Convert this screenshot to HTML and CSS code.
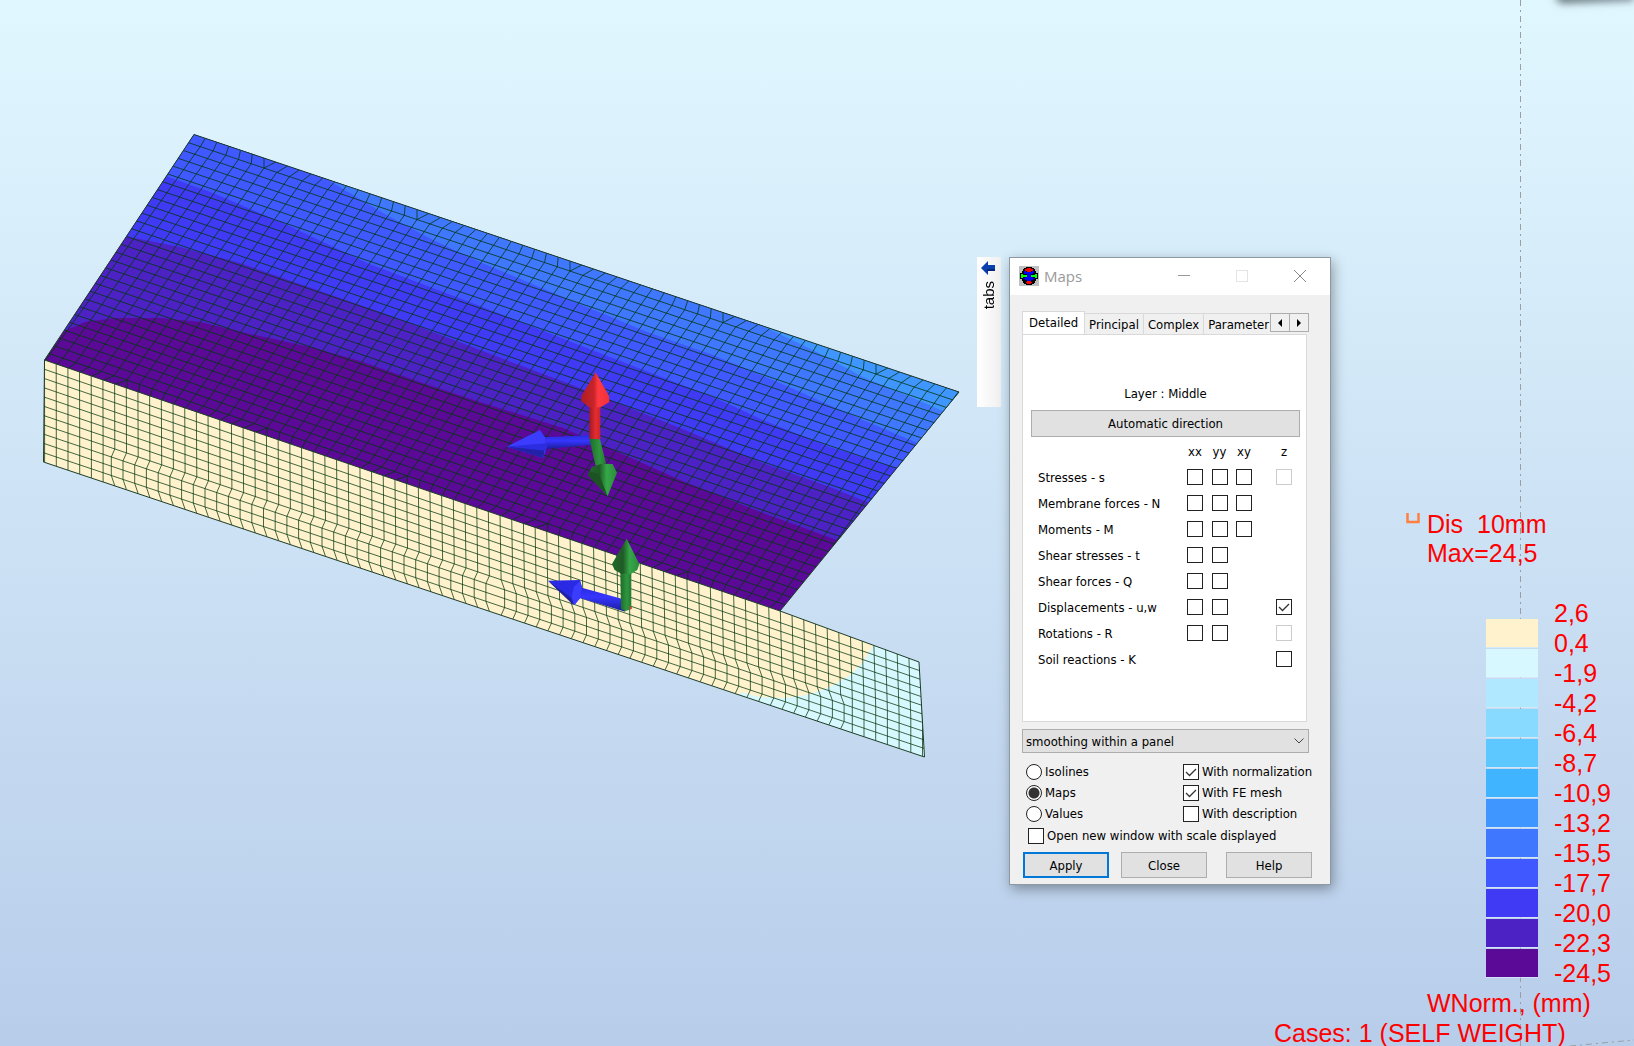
FILE: index.html
```html
<!DOCTYPE html>
<html lang="en">
<head>
    <meta charset="UTF-8">
    <meta name="viewport" content="width=device-width, initial-scale=1.0">
    <title>Maps</title>
    <link rel="stylesheet" href="styles.css">
</head>
<body>
    <main class="viewport">

        <svg class="scene" viewBox="0 0 1634 1046" preserveAspectRatio="xMinYMin slice" aria-hidden="true">
            <defs>
                <clipPath id="slabClip"><path d="M194 134.500 L959 392 L780 611 L400 490 L44.500 360 Z"/></clipPath>
                <clipPath id="wallClip"><path d="M44.500 360 L780 611 L919 662 L924.500 757 L43.500 462 Z"/></clipPath>
                <filter id="soft" x="-50%" y="-200%" width="200%" height="500%"><feGaussianBlur stdDeviation="4"/></filter>
                <linearGradient id="redShaft"><stop offset="0" stop-color="#a01a20"/><stop offset=".6" stop-color="#e62c32"/><stop offset="1" stop-color="#c8242c"/></linearGradient>
                <linearGradient id="redCone"><stop offset="0" stop-color="#b01c22"/><stop offset=".45" stop-color="#c8242a"/><stop offset=".6" stop-color="#ff3a40"/><stop offset="1" stop-color="#f03038"/></linearGradient>
                <linearGradient id="greenShaft"><stop offset="0" stop-color="#1c6a28"/><stop offset=".6" stop-color="#2f9640"/><stop offset="1" stop-color="#247a32"/></linearGradient>
                <linearGradient id="greenCone"><stop offset="0" stop-color="#1f6a2a"/><stop offset=".4" stop-color="#205a26"/><stop offset=".65" stop-color="#35a848"/><stop offset="1" stop-color="#2c8a3c"/></linearGradient>
                <linearGradient id="blueShaft" x2="0" y2="1"><stop offset="0" stop-color="#2a2ae0"/><stop offset=".4" stop-color="#3636ff"/><stop offset="1" stop-color="#1c1c9c"/></linearGradient>
            </defs>

            <!-- slab, one fill per displacement band -->
            <g clip-path="url(#slabClip)">
                <rect x="40" y="130" width="925" height="490" fill="#5a0a96"/>
                <path fill="#4c22c5" d="M60 333 L85 322 L115 318 L160 318 L200 322 L250 334 L310 347 L360 361 L420 382 L480 402 L563 428 L620 453 L680 480 L763 513 L842 542 L990 380 L190 120 Z"/>
                <path fill="#403af5" d="M120 235 L140 239 L180 247 L240 263 L300 284 L383 313 L480 350 L580 388 L680 428 L763 463 L830 487 L872 504 L990 380 L190 120 Z"/>
                <path fill="#3f58ff" d="M160 174 L213 193 L283 223 L367 263 L480 306 L597 352 L713 397 L763 420 L830 447 L904 470 L990 380 L190 120 Z"/>
                <path fill="#3f78ff" d="M318 174 L383 213 L433 240 L480 262 L563 297 L647 332 L713 355 L780 383 L863 420 L922 445 L990 380 L318 150 Z"/>
                <path fill="#3f96ff" d="M750 320 L813 350 L863 377 L913 398 L952 415 L990 380 L750 300 Z"/>
                <path id="slabMesh" class="mesh"/>
            </g>

            <!-- wall -->
            <g clip-path="url(#wallClip)">
                <rect x="40" y="350" width="890" height="410" fill="#fff2cc"/>
                <path fill="#d8f8ff" d="M874 640 L873 646 L863 662 L850 675 L830 687 L807 695 L783 698 L760 697 L740 692 L740 770 L930 770 L930 650 Z"/>
                <path id="wallMesh" class="mesh wall-mesh"/>
            </g>
            <path class="outline" d="M44.500 360 L194 134.500 L959 392 L780 611 M44.500 360 L780 611 L919 662 L924.500 757 L43.500 462 Z"/>

            <!-- local axes of both panels -->
            <g transform="translate(480 360) scale(.3333)">
                <path fill="url(#blueShaft)" d="M195 232 L330 226 L338 254 L200 267 Z"/>
                <path fill="#3c3cff" d="M80 260 L180 210 L195 232 L200 262 L190 294 Z"/>
                <path fill="#2222a8" d="M80 260 L194 268 L190 294 Z"/>
                <path fill="#2c2ce0" d="M80 260 L200 250 L198 272 Z"/>
                <path fill="url(#redShaft)" d="M328 138 H361 V238 H328 Z"/>
                <path fill="url(#redCone)" d="M347 37 L304 108 L304 124 L328 142 L362 142 L388 126 L387 108 Z"/>
                <path fill="url(#greenShaft)" d="M328 236 L360 238 L378 310 L347 318 Z"/>
                <path fill="url(#greenCone)" d="M383 408 L323 345 L336 320 L366 311 L398 312 L411 338 Z"/>
                <path fill="#1d5224" d="M383 408 L323 345 L328 334 L356 342 Z"/>
                <path fill="url(#blueShaft)" d="M300 682 L425 716 L436 755 L298 713 Z"/>
                <path fill="#2a2ae4" d="M204 662 L300 660 L306 682 L300 715 L283 735 Z"/>
                <path fill="#2020a0" d="M204 662 L275 715 L280 735 Z"/>
                <path fill="#3c3cff" d="M300 662 L306 682 L300 715 L283 735 L275 712 L282 680 Z"/>
                <path fill="url(#greenShaft)" d="M421 638 H454 V747 L438 753 L423 747 Z"/>
                <path fill="url(#greenCone)" d="M440 536 L396 612 L404 630 L424 641 L454 641 L472 630 L478 612 Z"/>
                <path stroke="#f04030" stroke-width="3" fill="none" d="M448 740 L456 744 L448 748"/>
            </g>

            <!-- construction axes -->
            <path class="axis" d="M1520.500 0 V1046"/>
            <path class="axis" d="M1570 1046 L1634 1040"/>
            <path d="M1554 -6 H1634 V0 L1560 3 Z" fill="#55666c" filter="url(#soft)"/>
        </svg>

        <section class="legend" aria-label="Displacement scale">
            <div class="readout">
                <svg class="unit-mark" viewBox="0 0 14 12" aria-hidden="true"><path d="M1.500 1 V10 H12.500 V1" fill="none" stroke="#ff8040" stroke-width="2.500"/></svg>
                <p>Dis&nbsp; 10mm</p>
                <p>Max=24,5</p>
            </div>
            <div class="scale">
                <div class="swatches">
                    <i class="swatch c1"></i>
                    <i class="swatch c2"></i>
                    <i class="swatch c3"></i>
                    <i class="swatch c4"></i>
                    <i class="swatch c5"></i>
                    <i class="swatch c6"></i>
                    <i class="swatch c7"></i>
                    <i class="swatch c8"></i>
                    <i class="swatch c9"></i>
                    <i class="swatch c10"></i>
                    <i class="swatch c11"></i>
                    <i class="swatch c12"></i>
                </div>
                <ul class="limits">
                    <li>2,6</li>
                    <li>0,4</li>
                    <li>-1,9</li>
                    <li>-4,2</li>
                    <li>-6,4</li>
                    <li>-8,7</li>
                    <li>-10,9</li>
                    <li>-13,2</li>
                    <li>-15,5</li>
                    <li>-17,7</li>
                    <li>-20,0</li>
                    <li>-22,3</li>
                    <li>-24,5</li>
                </ul>
            </div>
            <p class="quantity">WNorm., (mm)</p>
            <p>Cases: 1 (SELF WEIGHT)</p>
        </section>

        <button type="button" class="side-tabs">
            <svg viewBox="0 0 16 16" aria-hidden="true"><path d="M1 8 L8 1 V5 H15 V11 H8 V15 Z" fill="#0a3fae"/><path d="M8 11 H15 V9 H7 V13 Z" fill="#062878"/></svg>
            <span>tabs</span>
        </button>

        <section class="dialog" role="dialog" aria-labelledby="dialogTitle">
            <header class="titlebar">
                <svg class="app-icon" viewBox="0 0 20 20" shape-rendering="crispEdges" aria-hidden="true">
                    <rect width="20" height="20" fill="#c0c0c0"/>
                    <path fill="#000" d="M7 1h6v1h2v1h1v2h1v2h2v6h-2v2h-1v2h-1v1h-2v1H7v-1H5v-1H4v-2H3v-2H1V7h2V5h1V3h1V2h2z"/>
                    <path fill="#f00" d="M8 2h4v1h2v2h-2v1H8V5H6V3h2zM8 15h4v1h1v1h-1v1H8v-1H7v-1h1z"/>
                    <path fill="#00f" d="M5 5h2v1h6V5h2v2h-1v1h-2v3h2v1h2v1h-2v1h-2v1H8v-1H6v-1H4v-1h2v-1h2V8H5z"/>
                    <path fill="#0f0" d="M2 8h2v1h4v2H4v1H2zM18 8h-2v1h-4v2h4v1h2z"/>
                </svg>
                <h1 id="dialogTitle">Maps</h1>
                <div class="window-buttons">
                    <button type="button" aria-label="Minimize"><svg viewBox="0 0 14 14"><path d="M1 6.500 H13" stroke="#999"/></svg></button>
                    <button type="button" aria-label="Maximize" disabled><svg viewBox="0 0 14 14"><rect x="1.500" y="1.500" width="11" height="11" fill="none" stroke="#e4e4e4"/></svg></button>
                    <button type="button" aria-label="Close"><svg viewBox="0 0 14 14"><path d="M1 1 L13 13 M13 1 L1 13" stroke="#888"/></svg></button>
                </div>
            </header>

            <form class="dialog-body">
                <div class="tab-row">
                    <div class="tabs" role="tablist">
                        <button type="button" role="tab" class="tab active" aria-selected="true">Detailed</button>
                        <button type="button" role="tab" class="tab">Principal</button>
                        <button type="button" role="tab" class="tab">Complex</button>
                        <button type="button" role="tab" class="tab">Parameter</button>
                    </div>
                    <button type="button" class="tab-scroll" aria-label="Previous tab"><svg viewBox="0 0 8 8"><path d="M6 0 V8 L2 4 Z"/></svg></button>
                    <button type="button" class="tab-scroll" aria-label="Next tab"><svg viewBox="0 0 8 8"><path d="M2 0 V8 L6 4 Z"/></svg></button>
                </div>

                <div class="panel" role="tabpanel">
                    <p class="layer">Layer : Middle</p>
                    <button type="button" class="btn wide">Automatic direction</button>
                    <table class="components">
                        <thead>
                            <tr><td></td><th>xx</th><th>yy</th><th>xy</th><th>z</th></tr>
                        </thead>
                        <tbody>
                            <tr>
                                <th>Stresses - s</th>
                                <td><input type="checkbox" aria-label="Stresses xx"></td>
                                <td><input type="checkbox" aria-label="Stresses yy"></td>
                                <td><input type="checkbox" aria-label="Stresses xy"></td>
                                <td><input type="checkbox" aria-label="Stresses z" disabled></td>
                            </tr>
                            <tr>
                                <th>Membrane forces - N</th>
                                <td><input type="checkbox" aria-label="Membrane forces xx"></td>
                                <td><input type="checkbox" aria-label="Membrane forces yy"></td>
                                <td><input type="checkbox" aria-label="Membrane forces xy"></td>
                                <td></td>
                            </tr>
                            <tr>
                                <th>Moments - M</th>
                                <td><input type="checkbox" aria-label="Moments xx"></td>
                                <td><input type="checkbox" aria-label="Moments yy"></td>
                                <td><input type="checkbox" aria-label="Moments xy"></td>
                                <td></td>
                            </tr>
                            <tr>
                                <th>Shear stresses - t</th>
                                <td><input type="checkbox" aria-label="Shear stresses xx"></td>
                                <td><input type="checkbox" aria-label="Shear stresses yy"></td>
                                <td></td>
                                <td></td>
                            </tr>
                            <tr>
                                <th>Shear forces - Q</th>
                                <td><input type="checkbox" aria-label="Shear forces xx"></td>
                                <td><input type="checkbox" aria-label="Shear forces yy"></td>
                                <td></td>
                                <td></td>
                            </tr>
                            <tr>
                                <th>Displacements - u,w</th>
                                <td><input type="checkbox" aria-label="Displacements xx"></td>
                                <td><input type="checkbox" aria-label="Displacements yy"></td>
                                <td></td>
                                <td><input type="checkbox" aria-label="Displacements z" checked></td>
                            </tr>
                            <tr>
                                <th>Rotations - R</th>
                                <td><input type="checkbox" aria-label="Rotations xx"></td>
                                <td><input type="checkbox" aria-label="Rotations yy"></td>
                                <td></td>
                                <td><input type="checkbox" aria-label="Rotations z" disabled></td>
                            </tr>
                            <tr>
                                <th>Soil reactions - K</th>
                                <td></td>
                                <td></td>
                                <td></td>
                                <td><input type="checkbox" aria-label="Soil reactions z"></td>
                            </tr>
                        </tbody>
                    </table>
                </div>

                <div class="select-wrap">
                    <select aria-label="Smoothing">
                        <option>smoothing within a panel</option>
                        <option>no smoothing</option>
                    </select>
                    <svg viewBox="0 0 10 6" aria-hidden="true"><path d="M.5 .5 L5 5 L9.500 .5" fill="none" stroke="#444"/></svg>
                </div>

                <div class="options">
                    <label><input type="radio" name="display">Isolines</label>
                    <label><input type="checkbox" checked>With normalization</label>
                    <label><input type="radio" name="display" checked>Maps</label>
                    <label><input type="checkbox" checked>With FE mesh</label>
                    <label><input type="radio" name="display">Values</label>
                    <label><input type="checkbox">With description</label>
                    <label class="full"><input type="checkbox">Open new window with scale displayed</label>
                </div>

                <div class="actions">
                    <button type="button" class="btn primary">Apply</button>
                    <button type="button" class="btn">Close</button>
                    <button type="button" class="btn help">Help</button>
                </div>
            </form>
        </section>
    </main>

    <script src="mesh.js"></script>
</body>
</html>
```
FILE: styles.css
```css
* {
    margin: 0;
    padding: 0;
    box-sizing: border-box;
}

body {
    font-family: "DejaVu Sans Condensed", "DejaVu Sans", sans-serif;
    font-size: 13px;
    color: #000;
}

button, select {
    font: inherit;
    color: inherit;
}

.viewport {
    position: relative;
    height: 100vh;
    overflow: hidden;
    background: linear-gradient(#e1f7ff, #b8cdea);
}

.scene {
    position: absolute;
    width: 100%;
    height: 100%;
}

.mesh {
    fill: none;
    stroke: #04380f;
    stroke-width: 1;
    stroke-opacity: 0.8;
}

.wall-mesh {
    stroke-opacity: 0.75;
}

.outline {
    fill: none;
    stroke: #1c3c28;
}

.axis {
    fill: none;
    stroke: #9a9fa3;
    stroke-dasharray: 6 4 2 4;
}

/* colour scale */
.legend {
    position: absolute;
    right: 0;
    bottom: -2px;
    width: 360px;
    font-family: "Liberation Sans", Arial, sans-serif;
    font-size: 25px;
    line-height: 30px;
    color: #f00;
}

.readout {
    position: relative;
    margin: 0 0 30px 153px;
    line-height: 29px;
}

.unit-mark {
    position: absolute;
    left: -21px;
    top: 2px;
    width: 14px;
    height: 12px;
}

.scale {
    display: flex;
    gap: 16px;
    margin-left: 212px;
}

.swatches {
    width: 52px;
    padding-top: 21px;
}

.swatch {
    display: block;
    height: 28px;
    margin-bottom: 2px;
    box-shadow: 0 1px rgba(225, 240, 255, 0.6);
}

.swatch:last-child {
    margin-bottom: 0;
}

.limits {
    list-style: none;
}

.quantity {
    margin-left: 153px;
}

.c1 { background: #fff2cc; }
.c2 { background: #d8f8ff; }
.c3 { background: #b0e8ff; }
.c4 { background: #88daff; }
.c5 { background: #5cc8ff; }
.c6 { background: #40b4ff; }
.c7 { background: #3f96ff; }
.c8 { background: #3f78ff; }
.c9 { background: #3f58ff; }
.c10 { background: #403af5; }
.c11 { background: #4c22c5; }
.c12 { background: #5a0a96; }

/* collapsed tab strip */
.side-tabs {
    position: absolute;
    left: 977px;
    top: 257px;
    width: 24px;
    height: 150px;
    padding: 3px 2px 0 0;
    display: flex;
    flex-direction: column;
    align-items: center;
    gap: 5px;
    border: 0;
    background: linear-gradient(90deg, #fff, #f0f0f0);
    font-family: "Liberation Sans", Arial, sans-serif;
    font-size: 15px;
}

.side-tabs svg {
    width: 16px;
    height: 16px;
}

.side-tabs span {
    writing-mode: vertical-rl;
    transform: rotate(180deg);
}

/* dialog */
.dialog {
    position: absolute;
    left: 1009px;
    top: 257px;
    width: 322px;
    border: 1px solid #8c98a4;
    background: #f0f0f0;
    box-shadow: 2px 4px 12px rgba(0, 0, 0, 0.35);
}

.titlebar {
    display: flex;
    align-items: center;
    height: 37px;
    padding: 0 1px 2px 9px;
    background: #fff;
}

.app-icon {
    width: 20px;
    height: 20px;
}

.titlebar h1 {
    margin-left: 5px;
    font-family: "Open Sans", "Noto Sans", sans-serif;
    font-size: 15px;
    font-weight: normal;
    color: #999;
}

.window-buttons {
    display: flex;
    margin-left: auto;
}

.window-buttons button {
    width: 58px;
    height: 35px;
    border: 0;
    background: none;
}

.window-buttons svg {
    width: 14px;
    height: 14px;
    vertical-align: middle;
}

.dialog-body {
    padding: 16px 17px 6px 12px;
}

.tab-row {
    display: flex;
    align-items: flex-start;
    margin-right: 4px;
}

.tabs {
    display: flex;
    align-items: flex-end;
    width: 248px;
    overflow: hidden;
}

.tab {
    flex: none;
    height: 21px;
    padding: 0 4px;
    border: 1px solid #d9d9d9;
    border-left: 0;
    border-bottom: 0;
    background: #f0f0f0;
    white-space: nowrap;
}

.tab.active {
    height: 24px;
    margin-bottom: -1px;
    padding: 0 6px 2px;
    border-left: 1px solid #d9d9d9;
    background: #fff;
}

.tab-scroll {
    width: 20px;
    height: 19px;
    margin-top: 2px;
    border: 1px solid #adadad;
    background: #f0f0f0;
}

.tab-scroll + .tab-scroll {
    margin-left: -1px;
}

.tab-scroll svg {
    display: block;
    width: 8px;
    height: 8px;
    margin: 0 auto;
}

.panel {
    margin-right: 6px;
    padding: 51px 6px 49px 8px;
    border: 1px solid #d9d9d9;
    background: #fff;
}

.layer {
    height: 24px;
    line-height: 16px;
    text-align: center;
}

.btn {
    width: 86px;
    height: 26px;
    border: 1px solid #adadad;
    background: #e1e1e1;
}

.btn.wide {
    width: 100%;
    height: 27px;
}

.components {
    width: 262px;
    margin: 1px 0 0 7px;
    border-collapse: collapse;
    table-layout: fixed;
}

.components tr {
    height: 26px;
}

.components th {
    font-weight: normal;
    white-space: nowrap;
}

.components th, .components td {
    width: 24px;
    text-align: center;
    vertical-align: middle;
}

.components tr > :first-child {
    width: 145px;
    text-align: left;
}

.components tr > :nth-child(3) {
    width: 25px;
}

.components tr > :last-child {
    width: 44px;
    padding: 0 4px 0 16px;
}

input {
    appearance: none;
    flex: none;
    width: 16px;
    height: 16px;
    border: 1px solid #222;
    background: #fff;
    vertical-align: middle;
}

input:disabled {
    border-color: #ccc;
}

input[type="checkbox"]:checked {
    background: #fff url("data:image/svg+xml,%3Csvg xmlns='http://www.w3.org/2000/svg' viewBox='0 0 14 14'%3E%3Cpath d='M2 7l3.500 3.500L12 4' fill='none' stroke='%23333' stroke-width='1.300'/%3E%3C/svg%3E") center / 14px;
}

input[type="radio"] {
    border-radius: 50%;
}

input[type="radio"]:checked {
    background: radial-gradient(circle, #333 0 5px, #fff 6px);
}

.select-wrap {
    position: relative;
    margin: 7px 4px 8px 0;
}

.select-wrap select {
    display: block;
    appearance: none;
    width: 100%;
    height: 24px;
    padding: 0 24px 0 3px;
    border: 1px solid #adadad;
    background: #e1e1e1;
}

.select-wrap svg {
    position: absolute;
    right: 5px;
    top: 9px;
    width: 10px;
    height: 6px;
    pointer-events: none;
}

.options {
    display: grid;
    grid-template-columns: 157px 1fr;
    grid-auto-rows: 21px;
    margin-left: 4px;
}

.options label {
    display: flex;
    align-items: center;
    gap: 3px;
    white-space: nowrap;
}

.options .full {
    grid-column: 1 / -1;
    padding: 2px 0 0 2px;
}

.actions {
    display: flex;
    margin-top: 7px;
    padding-left: 1px;
    gap: 12px;
}

.actions .help {
    margin-left: 7px;
}

.btn.primary {
    border: 2px solid #0078d7;
}
```
FILE: mesh.js
```js
// finite element mesh of the slab and the wall

function segment(x1, y1, x2, y2) {
    return 'M' + x1.toFixed(1) + ' ' + y1.toFixed(1) + 'L' + x2.toFixed(1) + ' ' + y2.toFixed(1);
}

function slabTop(x) { return 134.5 + 0.3366 * (x - 194); }
function slabBottom(x) { return 360 + 0.3413 * (x - 44.5); }

function drawSlab() {
    const rows = 27;
    const depth = 10;
    let d = '';

    for (let i = 0; i <= rows; i++) {
        const t = i / rows;
        const y = x => (slabTop(x) + depth) * (1 - t) + (slabBottom(x) - 8) * t;
        d += segment(0, y(0), 1000, y(1000));
    }

    // straight cross lines of the inner mesh
    for (let i = -32; i < 75; i++) {
        const x1 = 264 + 12.75 * i;
        const x2 = x1 - 150;
        d += segment(x1, slabTop(x1) + depth, x2, slabBottom(x2) - 8);
    }

    // top edge has one more node per group than the row below
    for (let k = -1; k < 6; k++) {
        const start = 264 + 153 * k;
        d += segment(start, slabTop(start), start, slabTop(start) + depth);
        for (let j = 0; j < 12; j++) {
            const xe = start + 11.77 * (j + 1);
            const xi = start + 12.75 * j;
            d += segment(xe, slabTop(xe), xi, slabTop(xi) + depth);
        }
    }

    // same for the bottom edge, mirrored
    for (let k = -1; k < 6; k++) {
        const end = 127 + 140.2 * k;
        d += segment(end, slabBottom(end), end, slabBottom(end) - 8);
        for (let j = 0; j < 11; j++) {
            const xe = end - 11.68 * (j + 1);
            const xi = end - 12.75 * j;
            d += segment(xe, slabBottom(xe), xi, slabBottom(xi) - 8);
        }
    }

    document.getElementById('slabMesh').setAttribute('d', d);
}

function drawWall() {
    const rows = 11;
    const top = x => 360 + 0.3453 * (x - 44.5);
    const bottom = x => 462 + 0.3348 * (x - 43.5);
    let d = '';

    for (let i = 1; i < rows; i++) {
        const t = i / rows;
        const y = x => top(x) * (1 - t) + bottom(x) * t;
        d += segment(0, y(0), 950, y(950));
    }

    // columns lean over one row at 60% of the height and again at the foot
    for (let i = 0; i < 76; i++) {
        const x = 44.5 + 11.68 * i;
        const side = x < 490 ? -1 : 1;
        const lean = x < 110 || x > 840 ? 0 : 3.5 * side;
        const drift = x / 919 * 2;
        const points = [
            [x, -0.05],
            [x + drift, 7 / 11],
            [x + drift + lean, 8 / 11],
            [x + drift + lean, 10 / 11],
            [x + drift, 1]
        ];
        d += points.map((p, n) => {
            const y = top(p[0]) * (1 - p[1]) + bottom(p[0]) * p[1];
            return (n ? 'L' : 'M') + p[0].toFixed(1) + ' ' + y.toFixed(1);
        }).join('');
    }

    document.getElementById('wallMesh').setAttribute('d', d);
}

drawSlab();
drawWall();
```
